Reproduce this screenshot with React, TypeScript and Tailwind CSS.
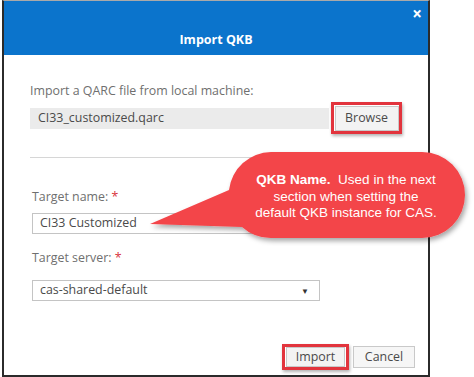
import React from "react";

const labelClass = "text-[12.4px] leading-4 text-[#6f6f6f]";
const fieldText = "text-[12.4px] text-[#4a4a4a]";

function Req() {
  return <span className="text-[#d8343c]"> *</span>;
}

function Callout() {
  return (
    <div className="absolute left-[146px] top-[150px] h-[96px] w-[328px]">
      <svg width="328" height="96" viewBox="0 0 328 96" className="absolute left-0 top-0">
        <defs>
          <filter id="sh" x="-10%" y="-10%" width="130%" height="140%">
            <feDropShadow dx="2" dy="3" stdDeviation="2.5" floodColor="#000" floodOpacity="0.35" />
          </filter>
        </defs>
        <g filter="url(#sh)">
          <path
            d="M125 2 H276 A43 43 0 0 1 276 88 H125 A43 43 0 0 1 96 77 L4 74 L83 40 A43 43 0 0 1 125 2 Z"
            fill="#f3454a"
          />
        </g>
      </svg>
      <div className="absolute left-[80px] top-[22px] w-[240px] text-center font-['Liberation_Sans',Arial,sans-serif] text-[13.5px] leading-[16.5px] text-white">
        <b>QKB Name.</b>&nbsp; Used in the next
        <br />
        section when setting the
        <br />
        default QKB instance for CAS.
      </div>
    </div>
  );
}

export default function App() {
  return (
    <div className="relative h-[377px] w-[474px] bg-white font-['Open_Sans',sans-serif]">
      <div className="ml-[2px] flex h-[377px] w-[428px] flex-col border-x-2 border-b-2 border-t border-[#2b2b2b] border-t-[#a9a9a9] bg-white">
        <div className="relative h-[54px] shrink-0 bg-[#0b74cc]">
          <span className="absolute right-[6px] top-[3px] text-[17px] font-bold leading-5 text-white">×</span>
          <div className="pt-[31px] text-center text-[12.5px] font-bold leading-4 text-white">Import QKB</div>
        </div>
        <div className="flex flex-col pl-[26px] pr-[26px]">
          <div className={`mt-[28px] ${labelClass}`}>Import a QARC file from local machine:</div>
          <div className="mt-[3px] flex items-center">
            <div className={`flex h-[21px] w-[300px] items-center bg-[#ebebeb] pl-[8px] ${fieldText}`}>
              CI33_customized.qarc
            </div>
            <div className="ml-[2px] flex h-[32px] w-[71px] items-center justify-center border-[3px] border-[#e2343d] shadow-[1px_2px_3px_rgba(0,0,0,0.3)]">
              <div className={`flex h-[25px] w-[64px] items-center justify-center border border-[#c9c9c9] bg-[#f3f3f3] ${fieldText}`}>
                Browse
              </div>
            </div>
          </div>
          <div className="mt-[23px] h-px w-[372px] bg-[#d6d6d6]" />
          <div className={`ml-[2px] mt-[31px] ${labelClass}`}>
            Target name:
            <Req />
          </div>
          <div className={`ml-[2px] mt-[8px] flex h-[21px] w-[288px] items-center border border-[#c4c4c4] pl-[7px] ${fieldText}`}>
            CI33 Customized
          </div>
          <div className={`ml-[2px] mt-[16px] ${labelClass}`}>
            Target server:
            <Req />
          </div>
          <div className={`ml-[2px] mt-[14px] flex h-[21px] w-[288px] items-center justify-between border border-[#c4c4c4] pl-[7px] pr-[10px] ${fieldText}`}>
            <span>cas-shared-default</span>
            <span className="text-[8px] text-[#333]">▼</span>
          </div>
          <div className="mt-[43px] flex items-center justify-end gap-[4px]">
            <div className="flex h-[26px] w-[67px] items-center justify-center border-[3px] border-[#e2343d] shadow-[1px_2px_3px_rgba(0,0,0,0.3)]">
              <div className={`flex h-[20px] w-[59px] items-center justify-center border border-[#c9c9c9] bg-[#f3f3f3] ${fieldText}`}>
                Import
              </div>
            </div>
            <div className={`-mr-[13px] flex h-[22px] w-[62px] items-center justify-center border border-[#c9c9c9] bg-[#f6f6f6] ${fieldText}`}>
              Cancel
            </div>
          </div>
        </div>
      </div>
      <Callout />
    </div>
  );
}
